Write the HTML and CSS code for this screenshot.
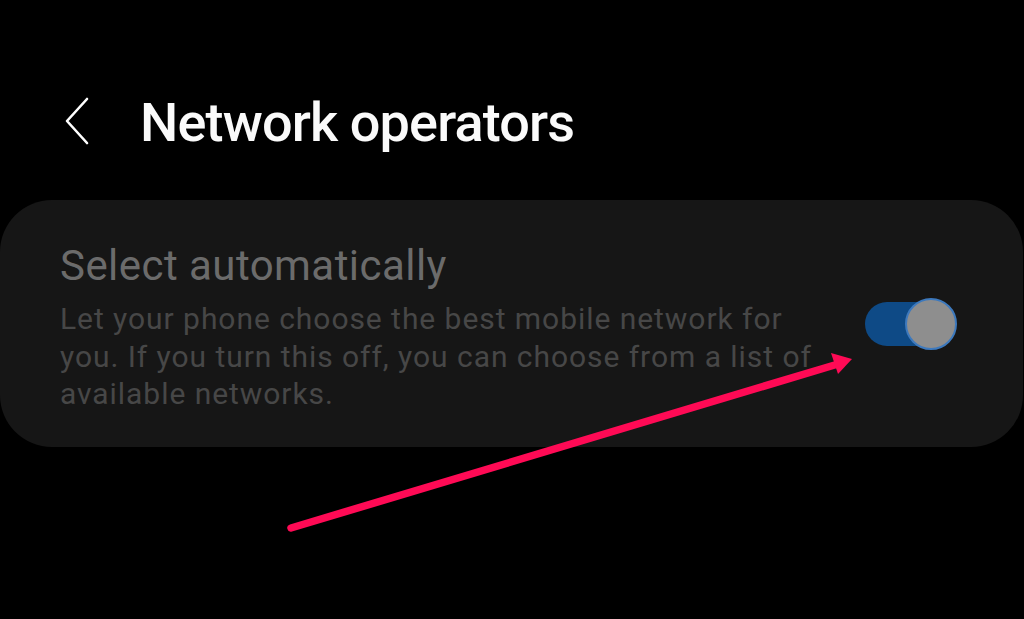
FILE: index.html
```html
<!DOCTYPE html>
<html>
<head>
<meta charset="utf-8">
<link rel="stylesheet" href="styles.css">
</head>
<body>
<header class="appbar">
  <span class="back">
    <svg width="30" height="50" viewBox="0 0 30 50"><polyline points="25,2 5,24 25,46" fill="none" stroke="#fff" stroke-width="2.6" stroke-linecap="round" stroke-linejoin="round"/></svg>
  </span>
  <h1 class="title">Network operators</h1>
</header>
<section class="card">
  <div class="text">
    <div class="heading">Select automatically</div>
    <div class="desc">Let your phone choose the best mobile network for you. If you turn this off, you can choose from a list of available networks.</div>
  </div>
  <div class="switch"><span class="thumb"></span></div>
</section>
<svg class="arrow" width="1024" height="619" viewBox="0 0 1024 619">
  <line x1="291" y1="528" x2="838" y2="364" stroke="#ff0a55" stroke-width="7.5" stroke-linecap="round"/>
  <polygon points="852,359 831,353 838,374" fill="#ff0a55"/>
</svg>
</body>
</html>
```
FILE: styles.css
```css
html, body {
  margin: 0;
  padding: 0;
  background: #000;
  width: 1024px;
  height: 619px;
  overflow: hidden;
  font-family: Roboto, "Noto Sans", sans-serif;
}
.appbar {
  display: flex;
  align-items: center;
  height: 200px;
  padding-left: 62px;
  padding-top: 44px;
  box-sizing: border-box;
}
.back {
  display: flex;
  width: 30px;
  height: 50px;
  margin-right: 48px;
}
.title {
  margin: 0;
  font-weight: 500;
  font-size: 54px;
  color: #fafafa;
  letter-spacing: -0.85px;
}
.card {
  display: flex;
  align-items: center;
  height: 247px;
  width: 1023px;
  box-sizing: border-box;
  background: #161616;
  border-radius: 52px;
  padding-left: 60px;
}
.text {
  width: 770px;
  margin-top: 8px;
}
.heading {
  font-size: 42px;
  line-height: 48px;
  letter-spacing: 0.45px;
  color: #6b6b6b;
  margin-bottom: 10px;
}
.desc {
  font-size: 30px;
  line-height: 37.5px;
  letter-spacing: 0.95px;
  color: #474747;
}
.switch {
  position: relative;
  width: 86px;
  height: 44px;
  margin-left: 35px;
  background: #0e4a86;
  border-radius: 22px;
}
.thumb {
  position: absolute;
  right: -6px;
  top: -4px;
  width: 48px;
  height: 48px;
  border-radius: 50%;
  background: #8e8e8e;
  border: 2px solid #3d79bd;
}
.arrow {
  position: absolute;
  left: 0;
  top: 0;
}
```
